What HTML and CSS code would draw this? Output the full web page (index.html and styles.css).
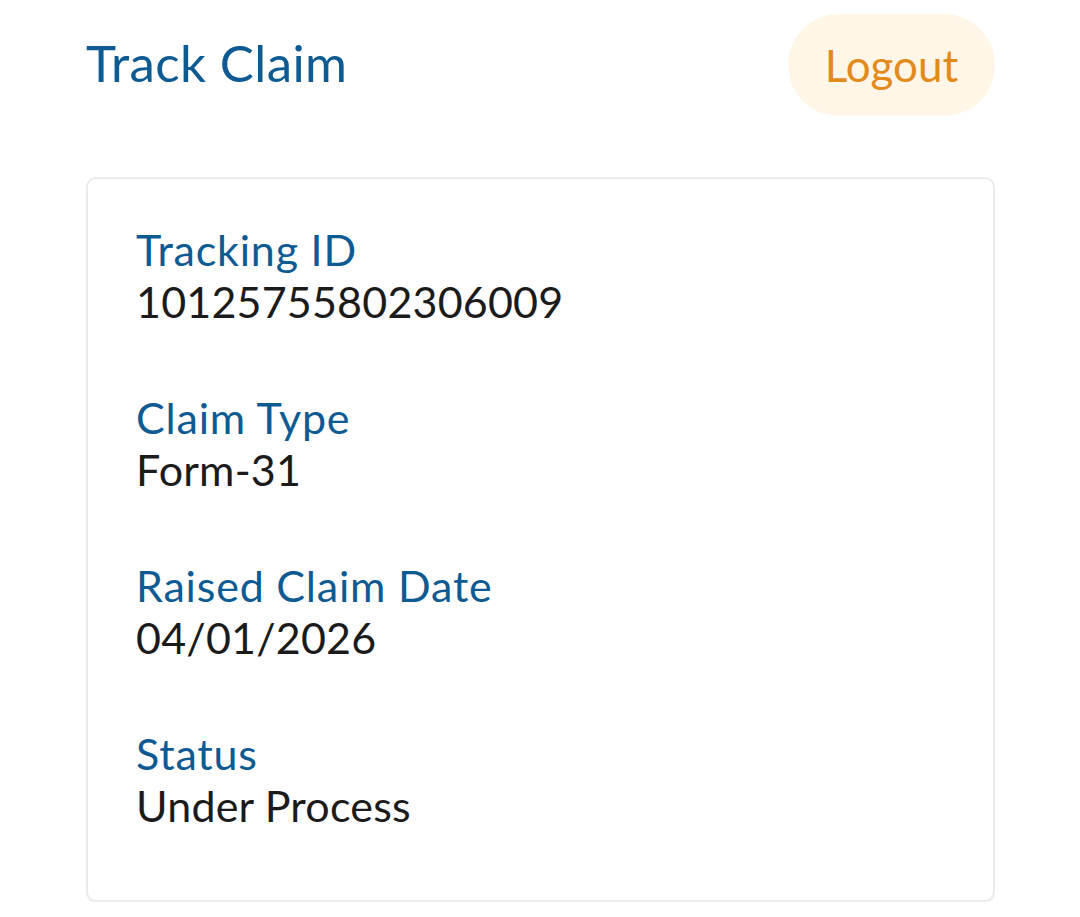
FILE: index.html
```html
<!DOCTYPE html>
<html lang="en">
<head>
<meta charset="utf-8">
<title>Track Claim</title>
<link rel="stylesheet" href="styles.css">
</head>
<body>
<div class="page">
  <header class="topbar">
    <h1 class="title">Track Claim</h1>
    <button class="logout">Logout</button>
  </header>
  <section class="card">
    <div class="field">
      <div class="label">Tracking ID</div>
      <div class="value">10125755802306009</div>
    </div>
    <div class="field">
      <div class="label">Claim Type</div>
      <div class="value">Form-31</div>
    </div>
    <div class="field">
      <div class="label">Raised Claim Date</div>
      <div class="value">04/01/2026</div>
    </div>
    <div class="field">
      <div class="label">Status</div>
      <div class="value">Under Process</div>
    </div>
  </section>
</div>
</body>
</html>
```
FILE: styles.css
```css
html, body {
  margin: 0;
  padding: 0;
  background: #ffffff;
}
body {
  font-family: "Lato", "Open Sans", sans-serif;
}
.page {
  padding: 14px 85px 0 86px;
}
.topbar {
  display: flex;
  justify-content: space-between;
  align-items: center;
  height: 102px;
}
.title {
  margin: 0;
  font-size: 51px;
  letter-spacing: 0.4px;
  font-weight: 400;
  color: #0e5a93;
  line-height: 1.2;
  margin-top: -4px;
}
.logout {
  font-family: "Lato", sans-serif;
  font-size: 44px;
  color: #e38a1c;
  background: #fff6e7;
  border: none;
  border-radius: 51px;
  width: 207px;
  height: 102px;
  padding: 0;
}
.card {
  margin-top: 61px;
  border: 2px solid #ebebeb;
  border-radius: 10px;
  box-shadow: 0 2px 2px rgba(0,0,0,0.04);
  padding: 45px 48px 68px 48px;
  display: flex;
  flex-direction: column;
  gap: 64px;
}
.field {
  display: flex;
  flex-direction: column;
}
.label {
  font-size: 43px;
  letter-spacing: 0.8px;
  line-height: 52px;
  color: #0e5a93;
}
.value {
  font-size: 43px;
  letter-spacing: 0.2px;
  line-height: 52px;
  color: #1b1b1b;
}
```
